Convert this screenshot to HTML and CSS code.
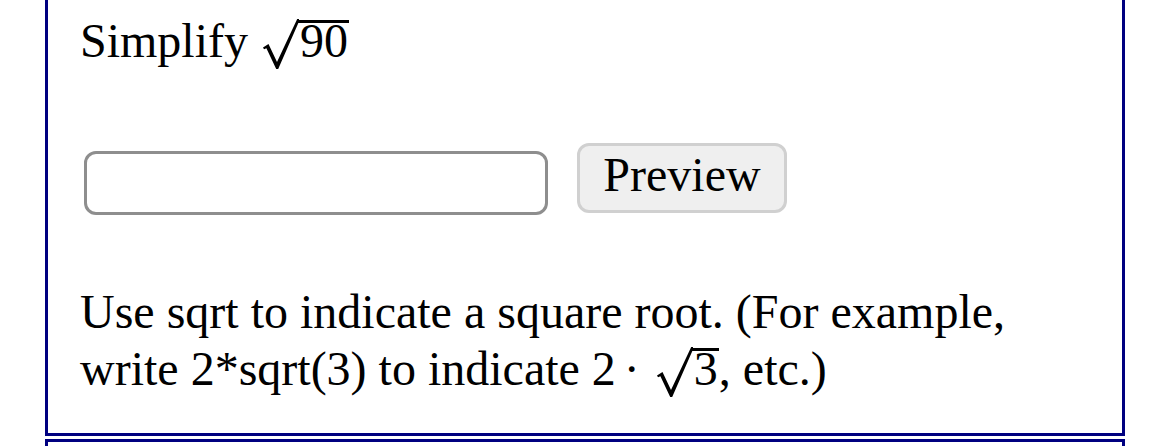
FILE: index.html
```html
<!DOCTYPE html>
<html>
<head>
<meta charset="utf-8">
<link rel="stylesheet" href="styles.css">
</head>
<body>
<div class="box">
  <p class="question">Simplify <span class="math"><svg class="radical" viewBox="0 0 36 50" width="36" height="50"><path d="M0 28.5 L5.5 25 L14 43 L34.2 0 L36 0 L36 2.6 L15.2 50 L13.2 50 L3.4 29.3 L1 30.3 Z"/></svg><span class="radicand">90</span></span></p>
  <div class="answer-row">
    <input class="answer" type="text">
    <button class="preview" type="button">Preview</button>
  </div>
  <p class="hint">Use sqrt to indicate a square root. (For example, write 2*sqrt(3) to indicate <span class="math">2<span class="dot">·</span><svg class="radical" viewBox="0 0 36 50" width="36" height="50"><path d="M0 28.5 L5.5 25 L14 43 L34.2 0 L36 0 L36 2.6 L15.2 50 L13.2 50 L3.4 29.3 L1 30.3 Z"/></svg><span class="radicand">3</span></span>, etc.)</p>
</div>
<div class="box next"></div>
</body>
</html>
```
FILE: styles.css
```css
html, body {
  margin: 0;
  padding: 0;
  background: #ffffff;
}
body {
  font-family: "Liberation Serif", "Times New Roman", serif;
  font-size: 48px;
  color: #000000;
}
.box {
  margin-left: 45px;
  width: 1080px;
  box-sizing: border-box;
  border: 3px solid #000080;
  border-top: none;
  padding: 12px 32px 36px 32px;
}
.box.next {
  margin-top: 3px;
  border-top: 3px solid #000080;
  height: 40px;
  padding: 0;
}
.question {
  margin: 0;
  line-height: 58px;
}
.math {
  white-space: nowrap;
}
.radical {
  display: inline-block;
  vertical-align: -12px;
  margin-left: 3px;
  fill: #000000;
}
.radicand {
  display: inline-block;
  line-height: 36px;
  border-top: 3px solid #000000;
  padding: 0 1px 0 2px;
  margin-left: -1px;
}
.answer-row {
  display: flex;
  align-items: flex-start;
  margin-top: 73px;
  gap: 29px;
}
.answer {
  margin: 8px 0 0 4px;
  width: 464px;
  height: 64px;
  box-sizing: border-box;
  border: 3px solid #8e8e8e;
  border-radius: 12px;
  background: #ffffff;
  padding: 0 12px;
  font: inherit;
  outline: none;
}
.preview {
  width: 210px;
  height: 70px;
  box-sizing: border-box;
  background: #efefef;
  border: 3px solid #d0d0d0;
  border-radius: 12px;
  font: inherit;
  color: #000000;
  padding: 0 0 8px 0;
}
.hint {
  margin: 68px 0 0 0;
  line-height: 57px;
}
.dot {
  margin: 0 14px 0 8px;
}
```
